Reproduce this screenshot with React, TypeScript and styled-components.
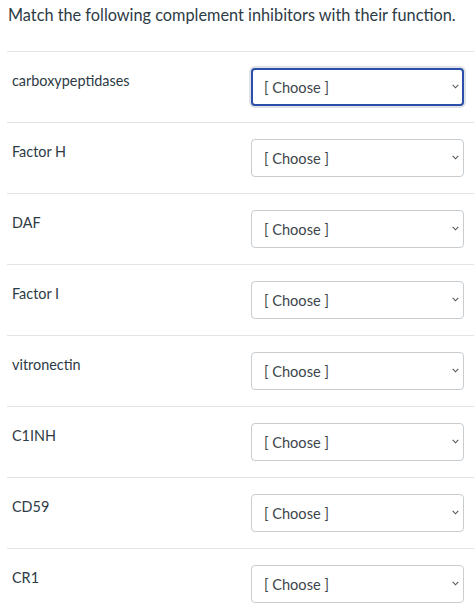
import React from 'react';
import styled, { createGlobalStyle } from 'styled-components';

const GlobalStyle = createGlobalStyle`
  body {
    margin: 0;
    background: #fff;
    font-family: Lato, "Liberation Sans", sans-serif;
    color: #2d3b45;
  }
`;

const Page = styled.div`
  width: 474px;
`;

const Title = styled.div`
  margin: 3px 0 0 8px;
  font-size: 16.3px;
  line-height: 24px;
  white-space: nowrap;
  color: #2d3b45;
`;

const List = styled.div`
  margin: 24px 0 0 7px;
`;

const Row = styled.div`
  display: flex;
  align-items: flex-start;
  border-top: 1px solid #e1e3e5;
  padding: 16px 10px 16px 5px;
`;

const Label = styled.div`
  flex: 1;
  padding-top: 3px;
  font-size: 14.4px;
  line-height: 20px;
  color: #2d3b45;
`;

const SelectWrap = styled.div`
  position: relative;
  width: 213px;
  height: 38px;
`;

const Select = styled.select<{ $focused?: boolean }>`
  appearance: none;
  box-sizing: border-box;
  width: 100%;
  height: 100%;
  margin: 0;
  padding: 0 24px 0 12px;
  font-family: Lato, "Liberation Sans", sans-serif;
  font-size: 14.6px;
  color: #3d464d;
  background: #fff;
  border: ${p => (p.$focused ? '2px solid #2b4fa8' : '1px solid #c7cdd1')};
  border-radius: 4px;
  box-shadow: ${p => (p.$focused ? '0 0 0 2px #dfe3e8' : 'none')};
  outline: none;
  ${p => p.$focused && 'padding-left: 11px;'}
`;

const Chevron = styled.svg`
  position: absolute;
  right: 5px;
  top: 16px;
  width: 7px;
  height: 5px;
  pointer-events: none;
`;

const items = [
  'carboxypeptidases',
  'Factor H',
  'DAF',
  'Factor I',
  'vitronectin',
  'C1INH',
  'CD59',
  'CR1',
];

const App = () => (
  <Page>
    <GlobalStyle />
    <Title>Match the following complement inhibitors with their function.</Title>
    <List>
      {items.map((item, i) => (
        <Row key={item}>
          <Label>{item}</Label>
          <SelectWrap>
            <Select $focused={i === 0} defaultValue="">
              <option value="">[ Choose ]</option>
            </Select>
            <Chevron viewBox="0 0 7 5">
              <path d="M0.7 0.9 L3.5 3.8 L6.3 0.9" fill="none" stroke="#555" strokeWidth="1.1" />
            </Chevron>
          </SelectWrap>
        </Row>
      ))}
    </List>
  </Page>
);

export default App;
